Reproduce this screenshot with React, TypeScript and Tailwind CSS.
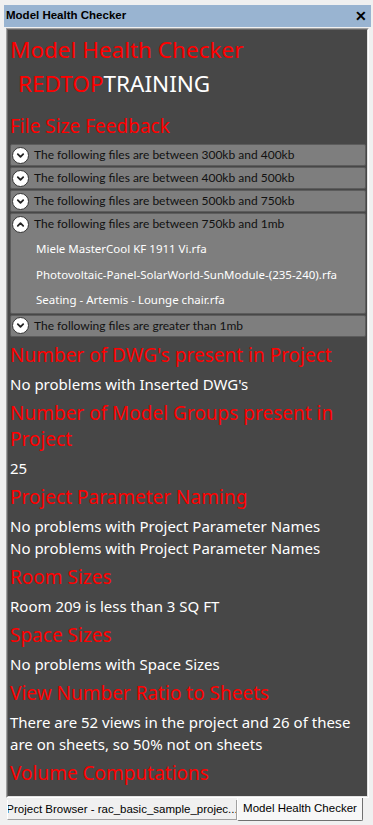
import React from 'react';

const Chevron = ({ up }: { up?: boolean }) => (
  <span className="flex h-[17px] w-[17px] shrink-0 items-center justify-center rounded-full border border-[#333] bg-white">
    <svg width="9" height="9" viewBox="0 0 10 10">
      <path
        d={up ? 'M2 6.5 L5 3.5 L8 6.5' : 'M2 3.5 L5 6.5 L8 3.5'}
        fill="none"
        stroke="#222"
        strokeWidth="2"
        strokeLinecap="round"
        strokeLinejoin="round"
      />
    </svg>
  </span>
);

const Expander: React.FC<{ label: string; items?: string[] }> = ({ label, items }) => (
  <div className="rounded-[2px] border border-[#5c5c5c] bg-[#7e7e7e]">
    <div
      className="flex h-[20px] items-center gap-[5px] pl-[1px] text-[12px] text-[#111]"
      style={{ fontFamily: 'Lato, sans-serif' }}
    >
      <Chevron up={!!items} />
      <span>{label}</span>
    </div>
    {items && (
      <div className="flex flex-col pl-[25px] pt-[2px] text-[11.5px] text-white">
        {items.map((f) => (
          <div key={f} className="h-[25.5px] leading-[25px]">
            {f}
          </div>
        ))}
      </div>
    )}
  </div>
);

const H = ({ children }: { children: React.ReactNode }) => (
  <div className="mt-[5px] text-[19px] leading-[26px] text-[#ff0000]">{children}</div>
);
const P = ({ children }: { children: React.ReactNode }) => (
  <div className="mt-[5px] text-[15px] leading-[22px] text-white">{children}</div>
);

export default function App() {
  return (
    <div
      className="flex h-[825px] w-[373px] flex-col overflow-hidden bg-[#f0f0f0] pl-[4px] pr-[2px] pt-[5px]"
      style={{ fontFamily: '"Noto Sans", sans-serif' }}
    >
      <div
        className="flex h-[22px] shrink-0 items-center justify-between bg-[#99b4d1] pl-[2px] pr-[4px] text-[11.5px] font-bold text-black"
        style={{ fontFamily: '"Liberation Sans", sans-serif' }}
      >
        <span>Model Health Checker</span>
        <span className="text-[14px]">✕</span>
      </div>
      <div className="flex min-h-0 flex-1 flex-col bg-[#f0f0f0] px-[2px] pt-[1px]">
        <div className="h-[770px] overflow-hidden border border-b-white border-l-[#a0a0a0] border-r-white border-t-[#a0a0a0]">
          <div className="h-full border border-b-[#e3e3e3] border-l-[#696969] border-r-[#e3e3e3] border-t-[#696969] bg-[#474747] pl-[2px] pr-[1px] pt-[4px]">
            <div className="text-[22.5px] leading-[32px] text-[#ff0000]">Model Health Checker</div>
            <div className="mt-[3px] pl-[8px] text-[22.5px] leading-[30px]">
              <span className="text-[#ff0000]">REDTOP</span>
              <span className="text-white">TRAINING</span>
            </div>
            <div className="mt-[14px]">
              <div className="text-[19px] leading-[26px] text-[#ff0000]">File Size Feedback</div>
            </div>
            <div className="mt-[5px] flex flex-col gap-[1px]">
              <Expander label="The following files are between 300kb and 400kb" />
              <Expander label="The following files are between 400kb and 500kb" />
              <Expander label="The following files are between 500kb and 750kb" />
              <Expander
                label="The following files are between 750kb and 1mb"
                items={[
                  'Miele MasterCool KF 1911 Vi.rfa',
                  'Photovoltaic-Panel-SolarWorld-SunModule-(235-240).rfa',
                  'Seating - Artemis - Lounge chair.rfa',
                ]}
              />
              <Expander label="The following files are greater than 1mb" />
            </div>
            <div className="flex flex-col">
              <H>Number of DWG's present in Project</H>
              <P>No problems with Inserted DWG's</P>
              <H>Number of Model Groups present in Project</H>
              <P>25</P>
              <H>Project Parameter Naming</H>
              <P>No problems with Project Parameter Names</P>
              <div className="text-[15px] leading-[22px] text-white">No problems with Project Parameter Names</div>
              <H>Room Sizes</H>
              <P>Room 209 is less than 3 SQ FT</P>
              <H>Space Sizes</H>
              <P>No problems with Space Sizes</P>
              <H>View Number Ratio to Sheets</H>
              <P>There are 52 views in the project and 26 of these are on sheets, so 50% not on sheets</P>
              <H>Volume Computations</H>
            </div>
          </div>
        </div>
        <div
          className="flex items-start pl-[1px] text-[11.5px] text-black"
          style={{ fontFamily: '"Liberation Sans", sans-serif' }}
        >
          <div className="mt-[2px] flex h-[20px] w-[230px] items-center justify-center overflow-hidden whitespace-nowrap border border-t-0 border-[#a0a0a0] border-l-white bg-[#f0f0f0]">
            Project Browser - rac_basic_sample_projec...
          </div>
          <div className="flex h-[23px] w-[126px] items-center justify-center whitespace-nowrap rounded-b-[2px] border border-t-0 border-[#707070] border-l-white bg-[#f7f7f7]">
            Model Health Checker
          </div>
        </div>
      </div>
    </div>
  );
}
